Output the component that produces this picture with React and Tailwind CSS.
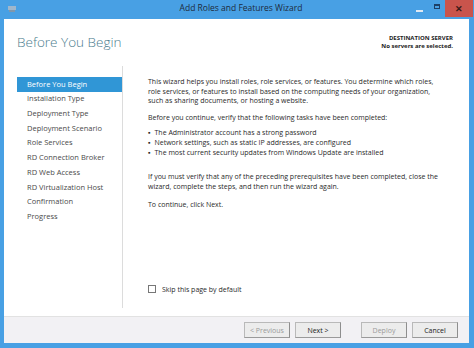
// Assistant « Add Roles and Features Wizard » — page d'accueil (Windows Server 2012)

const ETAPES = [
  'Before You Begin',
  'Installation Type',
  'Deployment Type',
  'Deployment Scenario',
  'Role Services',
  'RD Connection Broker',
  'RD Web Access',
  'RD Virtualization Host',
  'Confirmation',
  'Progress',
]

const PUCES = [
  'The Administrator account has a strong password',
  'Network settings, such as static IP addresses, are configured',
  'The most current security updates from Windows Update are installed',
]

function Bouton({ children, disabled }) {
  return (
    <button
      type="button"
      className={`h-[16px] w-[46px] border border-[#b9b9b9] border-r-[#8e8e8e] border-b-[#9a9a9a] bg-[#ececec] text-[7px] leading-none ${
        disabled ? 'text-[#9a9a9a]' : 'text-[#222]'
      }`}
    >
      {children}
    </button>
  )
}

export default function App() {
  return (
    <div
      className="flex h-[348px] w-[474px] flex-col bg-[#48a0e4]"
      style={{ fontFamily: '"Open Sans", "Noto Sans", sans-serif' }}
    >
      {/* Barre de titre */}
      <div className="flex h-[19px] items-start">
        <div className="flex h-[17px] w-[30px] items-center pl-[8px]">
          <svg width="8" height="6" viewBox="0 0 8 6">
            <rect x="0" y="0" width="8" height="4" fill="#9fb7cc" />
            <rect x="1" y="4" width="6" height="2" fill="#7f97ad" />
          </svg>
        </div>
        <div className="flex h-[17px] flex-1 items-center justify-center pl-[36px] text-[8.5px] text-[#1d2b3c]">
          Add Roles and Features Wizard
        </div>
        <div className="flex h-[17px] items-center pr-[5px]">
          <div className="mt-[4px] h-[2px] w-[7px] bg-[#dfe9f3]" />
          <div className="mb-[4px] ml-[11px] h-[5px] w-[6px] border border-t-2 border-[#1d3f66]" />
          <div className="ml-[5px] -mr-[4px] flex h-[17px] w-[28px] items-center justify-center bg-[#c9544c] text-[9px] font-bold text-[#3a1a18]">
            ✕
          </div>
        </div>
      </div>

      {/* Corps de la fenêtre */}
      <div className="mx-[4px] mr-[5px] mb-[5px] flex flex-1 flex-col bg-white">
        <div className="flex h-[47px] items-start justify-between pl-[13px] pr-[16px]">
          <h1 className="mt-[17px] text-[13.5px] font-light leading-none text-[#4b7d8e]">
            Before You Begin
          </h1>
          <div className="mt-[15px] text-right text-[6px] font-bold leading-[8px] text-[#222]">
            <p>DESTINATION SERVER</p>
            <p>No servers are selected.</p>
          </div>
        </div>

        <div className="flex flex-1">
          <nav className="w-[118px] shrink-0 pt-[11px] pl-[13px]">
            {ETAPES.map((etape, i) => (
              <div
                key={etape}
                className={`flex h-[14.7px] items-center pl-[10px] text-[7.5px] ${
                  i === 0 ? 'bg-[#3096d6] text-white' : 'text-[#4a4a4a]'
                }`}
              >
                {etape}
              </div>
            ))}
          </nav>
          <div className="mb-[8px] w-px bg-[#dcdcdc]" />

          <main className="flex min-w-0 flex-1 flex-col whitespace-nowrap pl-[25px] pt-[11px] text-[7px] leading-[9.5px] text-[#2a2a2a]">
            <p>
              This wizard helps you install roles, role services, or features. You determine which roles,
              <br />
              role services, or features to install based on the computing needs of your organization,
              <br />
              such as sharing documents, or hosting a website.
            </p>
            <p className="mt-[7px]">Before you continue, verify that the following tasks have been completed:</p>
            <ul className="mt-[6px] leading-[9.8px]">
              {PUCES.map((puce) => (
                <li key={puce} className="flex gap-[4px]">
                  <span>▪</span>
                  <span>{puce}</span>
                </li>
              ))}
            </ul>
            <p className="mt-[15px]">
              If you must verify that any of the preceding prerequisites have been completed, close the
              <br />
              wizard, complete the steps, and then run the wizard again.
            </p>
            <p className="mt-[9px]">To continue, click Next.</p>

            <label className="mt-auto mb-[22px] flex items-center gap-[6px]">
              <span className="h-[8px] w-[8px] border border-[#777] bg-white" />
              <span>Skip this page by default</span>
            </label>
          </main>
        </div>

        <footer className="flex h-[27px] items-center justify-end gap-[5px] border-t border-[#e2e2e2] bg-[#f2f1f4] pr-[11px]">
          <Bouton disabled>&lt; Previous</Bouton>
          <Bouton>Next &gt;</Bouton>
          <div className="w-[10px]" />
          <Bouton disabled>Deploy</Bouton>
          <Bouton>Cancel</Bouton>
        </footer>
      </div>
    </div>
  )
}
